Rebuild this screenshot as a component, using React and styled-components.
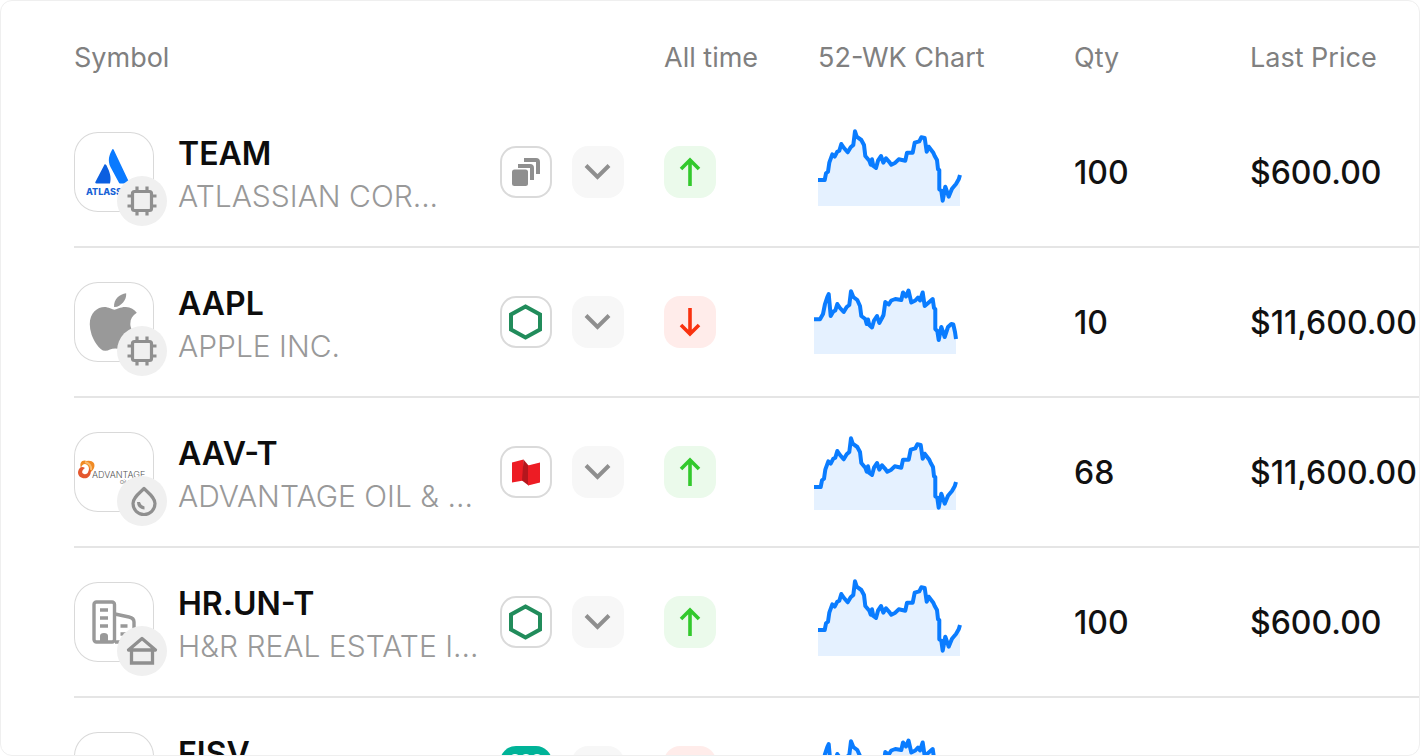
import React from 'react';
import styled, { createGlobalStyle } from 'styled-components';
import { FaApple } from 'react-icons/fa';

const GlobalStyle = createGlobalStyle`
  * {
    box-sizing: border-box;
  }

  body {
    margin: 0;
    background-color: #ffffff;
    font-family: Inter, 'Liberation Sans', sans-serif;
  }
`;

const Card = styled.main`
  height: 100vh;
  overflow: hidden;
  padding-left: 73px;
  background-color: #ffffff;
  border: 1px solid #efefef;
  border-radius: 12px;
`;

const Table = styled.table`
  width: 100%;
  table-layout: fixed;
  border-collapse: separate;
  border-spacing: 0;
`;

const Col = styled.col`
  width: ${props => props.$width || 'auto'};
`;

const HeadCell = styled.th`
  height: 97px;
  padding: 16px 0 0 ${props => (props.$indent ? '4px' : '0')};
  text-align: left;
  vertical-align: middle;
  white-space: nowrap;
  font-size: 27px;
  font-weight: 400;
  color: #808080;
`;

const Cell = styled.td`
  height: 150px;
  padding: 0;
  vertical-align: middle;
  white-space: nowrap;
  border-bottom: 2px solid #e5e5e5;
  font-size: 32px;
  font-weight: 500;
  color: #111111;
`;

const SymbolGroup = styled.div`
  display: flex;
  align-items: center;
  gap: 24px;
`;

const LogoBox = styled.div`
  position: relative;
  flex: none;
  width: 80px;
  height: 80px;
  border-radius: 24px;
  box-shadow: inset 0 0 0 1px #d9d9d9;
`;

const LogoArt = styled.div`
  display: flex;
  align-items: center;
  justify-content: center;
  height: 80px;
  color: #999999;
`;

const Badge = styled.div`
  position: absolute;
  right: -13px;
  bottom: -14px;
  width: 50px;
  height: 50px;
  border-radius: 50%;
  background-color: #f0f0f0;
  color: #8f8f8f;
`;

const Names = styled.div`
  display: flex;
  flex-direction: column;
  padding-top: 6px;
`;

const Ticker = styled.span`
  line-height: 42px;
  font-weight: 600;
  color: #0d0d0d;
`;

const Company = styled.span`
  line-height: 42px;
  font-size: 30px;
  font-weight: 300;
  color: #999999;
`;

const Actions = styled.div`
  display: flex;
  gap: 20px;
`;

const BrokerTile = styled.div`
  width: 52px;
  height: 52px;
  border-radius: 16px;
  background-color: ${props => props.$fill || '#ffffff'};
  box-shadow: inset 0 0 0 ${props => (props.$fill ? '0' : '2px')} #dadada;
  color: ${props => props.$color || 'inherit'};
`;

const ToggleButton = styled.button`
  width: 52px;
  height: 52px;
  padding: 0;
  border: none;
  border-radius: 16px;
  background-color: #f7f7f7;
  color: #8f8f8f;
  cursor: pointer;
`;

const TrendTile = styled.div`
  width: 52px;
  height: 52px;
  border-radius: 16px;
  background-color: ${props => (props.$up ? '#ebfaeb' : '#ffecea')};
  color: ${props => (props.$up ? '#33c92d' : '#f9320f')};
`;

const Icon = styled.svg`
  display: block;
  fill: none;
  stroke: currentColor;
  stroke-width: ${props => props.$weight || 4};
`;

const Chart = styled.svg`
  display: block;
`;

const AtlassianLogo = () => (
  <svg width="80" height="80" viewBox="0 0 80 80">
    <path
      d="M30.5 32.5C31.5 31.8 32.5 33 33 34.5C36 40.5 37.5 45.5 36 51.5H22.5C21.3 51.5 21 50.7 21.5 49.8Z"
      fill="#0b5fe0"
    />
    <path
      d="M38.2 17.5C38.6 16.8 39.2 16.8 39.6 17.5L55 50C55.4 51 55 51.5 54 51.5H46.5C45.6 51.5 45 51 44.7 50.2L36.5 35C33.5 28.5 35 23.5 38.2 17.5Z"
      fill="#0a7aff"
    />
    <text x="12" y="63" fontSize="9" fontWeight="800" fill="#1763d6">
      ATLASSIAN
    </text>
  </svg>
);

const AdvantageLogo = () => (
  <svg width="80" height="80" viewBox="0 0 80 80">
    <path d="M7 36C5 31 8 27 13 29C18 28 22 31 20 36C19 39 16 40 14 42C16 37 15 33 11 32C9 32 8 33 7 36Z" fill="#f08a24" />
    <path d="M4 40C5 35 8 34 11 36C8 38 7 41 10 42C13 43 15 40 15 36C18 39 17 44 13 46C8 47 4 45 4 40Z" fill="#e4572e" />
    <path d="M11 30C15 31 18 34 17 38" fill="none" stroke="#f9b96b" strokeWidth="2" />
    <text x="18" y="46" fontSize="9" fontWeight="300" fill="#555555">
      ADVANTAGE
    </text>
    <text x="46" y="52" fontSize="5" fill="#777777">
      Oil &amp; Gas
    </text>
  </svg>
);

const BuildingLogo = () => (
  <Icon width="80" height="80" viewBox="0 0 80 80" $weight={3.4}>
    <rect x="20" y="20" width="20.5" height="40" rx="2.5" />
    <path d="M41 32L55 35Q60 36 60 40V60H41" />
    <path d="M26 28H34M26 36H34M26 44H34M46.5 44H53.5M46.5 52H53.5" />
    <path d="M26 60V54Q26 51 30 51Q34 51 34 54V60Z" fill="currentColor" stroke="none" />
  </Icon>
);

const ChipIcon = () => (
  <Icon width="50" height="50" viewBox="0 0 50 50" $weight={3.2}>
    <rect x="15.5" y="15.5" width="19" height="19" rx="2" />
    <path d="M20 15V10.5M30 15V10.5M20 35V39.5M30 35V39.5M15 20H10.5M15 30H10.5M35 20H39.5M35 30H39.5" />
  </Icon>
);

const DropIcon = () => (
  <Icon width="50" height="50" viewBox="0 0 50 50" $weight={3.2}>
    <path d="M27 12.5C22 17.5 16 21.5 16 27.5A11 11 0 0 0 38 27.5C38 21.5 32 17.5 27 12.5Z" strokeLinejoin="round" />
    <path d="M20 26Q20 33 27.5 33.5L27.5 30.5Q24 29.5 23 26Z" fill="currentColor" stroke="none" />
  </Icon>
);

const HomeIcon = () => (
  <Icon width="50" height="50" viewBox="0 0 50 50" $weight={3.3}>
    <path d="M11.5 24L25 12.5L38.5 24Z" strokeLinejoin="round" />
    <path d="M14.5 25V37H35.5V25" />
  </Icon>
);

const StackIcon = () => (
  <Icon width="52" height="52" viewBox="0 0 52 52">
    <rect x="12" y="23.5" width="16" height="16.5" rx="2.5" fill="currentColor" stroke="none" />
    <path d="M18 20H30Q32 20 32 22V34" />
    <path d="M24 14H36Q38 14 38 16V28" />
  </Icon>
);

const HexagonIcon = () => (
  <Icon width="52" height="52" viewBox="0 0 52 52">
    <path d="M25.5 10.5L40 18.5V33.5L25.5 41.5L11 33.5V18.5Z" />
  </Icon>
);

const FlagIcon = () => (
  <svg width="52" height="52" viewBox="0 0 52 52">
    <path d="M12 16.5L23.5 13.5V34.5L12 36.5Z" fill="#ed1c24" />
    <path d="M23.5 13.5L28.5 19.5V39.5L22 34.5Z" fill="#b5161d" />
    <path d="M28 19.5L40 16.5V36.5L28 39.5Z" fill="#ed1c24" />
  </svg>
);

const DotsIcon = () => (
  <svg width="52" height="52" viewBox="0 0 52 52">
    <g fill="#ffffff">
      <circle cx="15" cy="14" r="6" />
      <circle cx="26" cy="14" r="6" />
      <circle cx="37" cy="14" r="6" />
    </g>
  </svg>
);

const ChevronIcon = () => (
  <Icon width="52" height="52" viewBox="0 0 52 52">
    <path d="M14 19.5L25.5 31L37 19.5" />
  </Icon>
);

const ArrowIcon = ({ up }) => (
  <Icon width="52" height="52" viewBox="0 0 52 52" $weight={3.6}>
    <path d={up ? 'M26 40V14M17 23L26 14L35 23' : 'M26 12V38M17 29L26 38L35 29'} />
  </Icon>
);

const rising =
  '0,52 6.7,52 8,45.3 10,43.7 11.3,34.7 14.3,26.3 16.7,28.7 19.3,23.7 21.3,22.7 23.3,16 26,20 29.7,24.3 32.7,19.3 35.3,17 37,3.3 38.7,8.7 43.3,12 46,17 47.3,28 51.3,32.7 52.7,36.7 54,31.3 55.3,38 58,40 60,32.7 63,28 65.3,34.7 68,30.3 70.7,33.3 73.3,36.7 77.3,34.7 80.7,31.3 87.3,32.7 89,24.7 94.7,24.7 96.7,14.7 101.3,13.3 103.3,9.3 106.7,10 108.7,23.7 110.7,18.7 115.3,24.7 116.7,28 119,32 120,41.3 121.3,42 121.3,61.3 123.3,62.7 124.7,72.7 127.3,58.7 130.7,68.7 134,60.7 138,56 140.7,51.3 142,47';

const falling =
  '0,31.3 6,31.3 9,26 11,16 13.3,9 14.7,6 16.7,28 19.3,23.5 21.3,22.5 23.3,16 26,20 29.7,24 32.7,19 35.3,17 37,3.3 39.3,9 43.3,12 46,18 47.3,28 51.3,31 52.7,36 54,31.5 55.3,37 58,39.5 60,32.5 63,28 65.3,35 68,30 69.5,27 71.3,14 74.7,16.5 77.3,12.5 81.3,11 87.3,12 89,4.5 92,8.5 94.5,2.5 97.3,14.5 101.3,12.5 104,9.5 106,12.5 108.7,4.5 110.7,18 115.3,14 118.7,11 120,20 121.3,21 121.3,41 123.3,43 124.7,52 127.3,39 130.7,49 134,39 137.3,36 139.3,36.5 141,44 142,51';

const charts = {
  rise: { points: rising, left: 0, area: 75, height: 74 },
  riseRaised: { points: rising, left: 4, area: 78, height: 88 },
  fall: { points: falling, left: 0, area: 66, height: 68 },
};

const Sparkline = ({ kind }) => {
  const { points, left, area, height } = charts[kind];
  return (
    <Chart width="148" height={height} viewBox={`${-left} 0 148 ${height}`} overflow="visible">
      <polygon points={`0,${area} ${points} 142,${area}`} fill="#e5f1ff" />
      <polyline points={points} fill="none" stroke="#0a7cff" strokeWidth="4" strokeLinejoin="round" />
    </Chart>
  );
};

const holdings = [
  {
    ticker: 'TEAM',
    company: 'ATLASSIAN COR...',
    logo: <AtlassianLogo />,
    sector: <ChipIcon />,
    broker: <StackIcon />,
    brokerColor: '#8f8f8f',
    up: true,
    chart: 'riseRaised',
    qty: '100',
    price: '$600.00',
  },
  {
    ticker: 'AAPL',
    company: 'APPLE INC.',
    logo: <FaApple size={66} />,
    sector: <ChipIcon />,
    broker: <HexagonIcon />,
    brokerColor: '#218c5b',
    up: false,
    chart: 'fall',
    qty: '10',
    price: '$11,600.00',
  },
  {
    ticker: 'AAV-T',
    company: 'ADVANTAGE OIL & ...',
    logo: <AdvantageLogo />,
    sector: <DropIcon />,
    broker: <FlagIcon />,
    up: true,
    chart: 'rise',
    qty: '68',
    price: '$11,600.00',
  },
  {
    ticker: 'HR.UN-T',
    company: 'H&R REAL ESTATE I...',
    logo: <BuildingLogo />,
    sector: <HomeIcon />,
    broker: <HexagonIcon />,
    brokerColor: '#218c5b',
    up: true,
    chart: 'riseRaised',
    qty: '100',
    price: '$600.00',
  },
  {
    ticker: 'FISV',
    company: 'FISERV INC.',
    logo: null,
    sector: <ChipIcon />,
    broker: <DotsIcon />,
    brokerFill: '#00b398',
    up: false,
    chart: 'fall',
    qty: '10',
    price: '$600.00',
  },
];

const HoldingRow = ({ holding }) => (
  <tr>
    <Cell>
      <SymbolGroup>
        <LogoBox>
          <LogoArt>{holding.logo}</LogoArt>
          <Badge>{holding.sector}</Badge>
        </LogoBox>
        <Names>
          <Ticker>{holding.ticker}</Ticker>
          <Company>{holding.company}</Company>
        </Names>
      </SymbolGroup>
    </Cell>
    <Cell>
      <Actions>
        <BrokerTile $fill={holding.brokerFill} $color={holding.brokerColor}>
          {holding.broker}
        </BrokerTile>
        <ToggleButton type="button" aria-label={`Expand ${holding.ticker}`}>
          <ChevronIcon />
        </ToggleButton>
      </Actions>
    </Cell>
    <Cell>
      <TrendTile $up={holding.up}>
        <ArrowIcon up={holding.up} />
      </TrendTile>
    </Cell>
    <Cell>
      <Sparkline kind={holding.chart} />
    </Cell>
    <Cell>{holding.qty}</Cell>
    <Cell>{holding.price}</Cell>
  </tr>
);

const App = () => {
  return (
    <>
      <GlobalStyle />
      <Card>
        <Table>
          <colgroup>
            <Col $width="426px" />
            <Col $width="164px" />
            <Col $width="150px" />
            <Col $width="260px" />
            <Col $width="176px" />
            <Col />
          </colgroup>
          <thead>
            <tr>
              <HeadCell scope="col" colSpan={2}>
                Symbol
              </HeadCell>
              <HeadCell scope="col">All time</HeadCell>
              <HeadCell scope="col" $indent>
                52-WK Chart
              </HeadCell>
              <HeadCell scope="col">Qty</HeadCell>
              <HeadCell scope="col">Last Price</HeadCell>
            </tr>
          </thead>
          <tbody>
            {holdings.map(holding => (
              <HoldingRow key={holding.ticker} holding={holding} />
            ))}
          </tbody>
        </Table>
      </Card>
    </>
  );
};

export default App;
